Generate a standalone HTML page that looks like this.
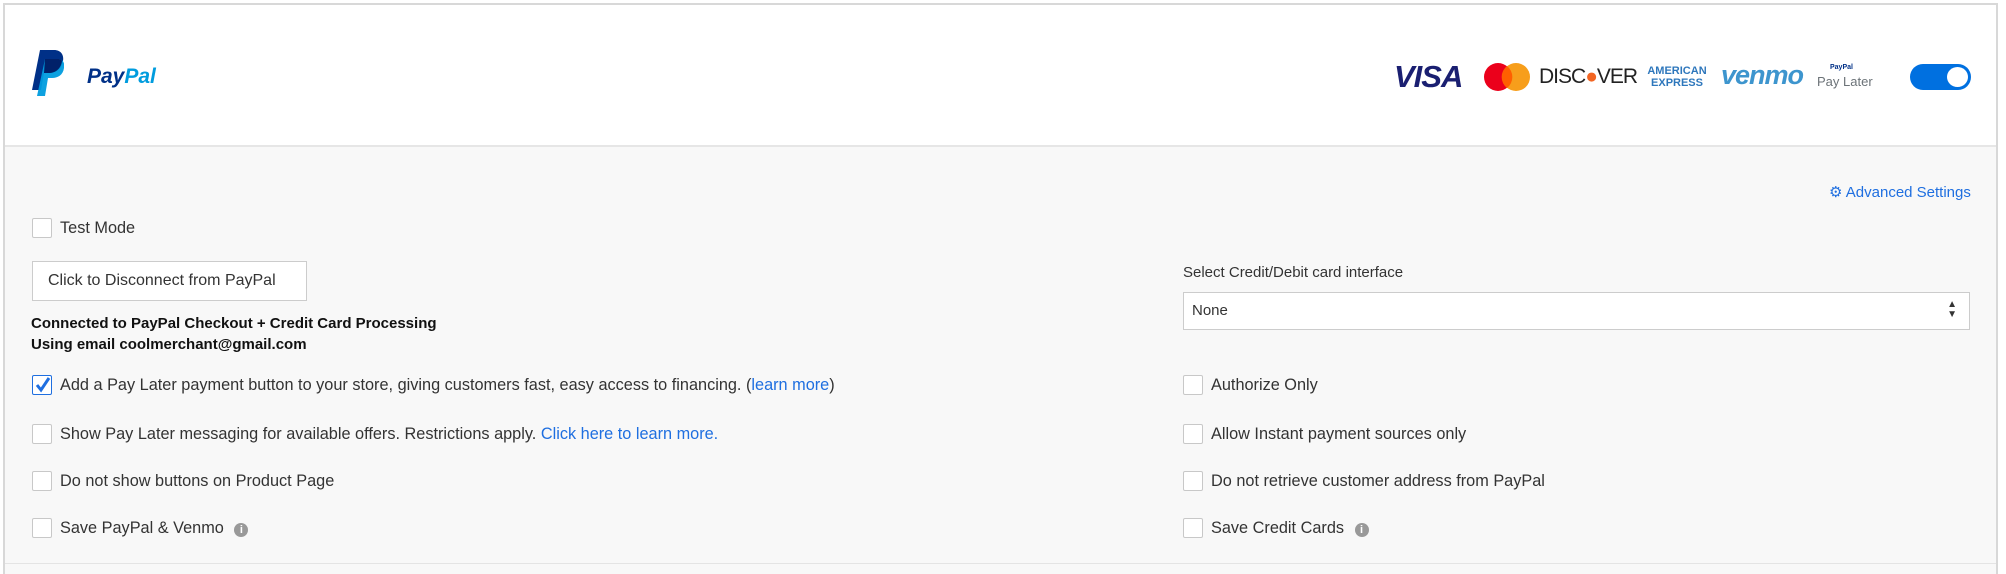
<!DOCTYPE html>
<html><head><meta charset="utf-8"><style>
*{box-sizing:border-box;margin:0;padding:0}
body{width:2006px;height:574px;background:#fff;font-family:"Liberation Sans",sans-serif;color:#333;position:relative;overflow:hidden}
.abs{position:absolute}
.outer{left:3px;top:3px;width:1995px;height:571px;border:2px solid #d8d8d8;border-bottom:none;background:#f8f8f8}
.head{left:5px;top:5px;width:1991px;height:142px;background:#fff;border-bottom:2px solid #e6e6e6}
.cb{width:20px;height:20px;border:1px solid #c8c8c8;background:#fff;border-radius:2px}
.lbl{font-size:16.3px;color:#333;white-space:nowrap}
a{color:#1f6fe0;text-decoration:none}
</style></head><body>
<div class="abs outer"></div>
<div class="abs head"></div>
<svg class="abs" style="left:32px;top:50px" width="32" height="52" viewBox="0 0 32 52">
<path d="M8 0h14c7 0 10 5 9 11c-1 8-7 12-14 12h-5l-3 17h-9z" fill="#003087"/>
<path d="M13 9h13c5 0 7 4 6 9c-1 7-6 10-12 10h-4l-3 18h-8l8-37z" fill="#009cde" opacity=".95"/>
<path d="M13 9h13c2 0 4 1 4 2c-1 8-7 12-13 12h-5z" fill="#012169"/>
</svg>
<div class="abs" style="left:87px;top:65px;font-size:21px;font-weight:bold;font-style:italic;color:#003087">Pay<span style="color:#009cde">Pal</span></div>
<div class="abs" style="left:1394px;top:59px;font-size:31px;font-weight:bold;font-style:italic;color:#1a1f71;letter-spacing:-1px">VISA</div>
<svg class="abs" style="left:1484px;top:63px" width="46" height="28"><circle cx="14" cy="14" r="14" fill="#eb001b"/><circle cx="32" cy="14" r="14" fill="#f79e1b"/><path d="M23 3a14 14 0 0 1 0 22a14 14 0 0 1 0-22z" fill="#ff5f00"/></svg>
<div class="abs" style="left:1539px;top:65px;font-size:21px;color:#222;letter-spacing:-1px">DISC<span style="color:#f26522">●</span>VER</div>
<div class="abs" style="left:1644px;top:65px;font-size:11px;font-weight:bold;color:#2e77bc;line-height:12px;text-align:center;width:66px">AMERICAN<br>EXPRESS</div>
<div class="abs" style="left:1721px;top:60px;font-size:27px;font-weight:bold;font-style:italic;color:#3d95ce;letter-spacing:-1px">venmo</div>
<div class="abs" style="left:1820px;top:64px;font-size:7px;font-weight:bold;color:#003087;padding-left:10px">PayPal</div>
<div class="abs" style="left:1817px;top:74px;font-size:13px;color:#6c7378">Pay Later</div>
<div class="abs" style="left:1910px;top:64px;width:61px;height:26px;border-radius:13px;background:#0070e0"></div>
<div class="abs" style="left:1947px;top:67px;width:21px;height:20px;border-radius:50%;background:#fff"></div>

<div class="abs" style="left:1829px;top:183px;font-size:15px;color:#1f6fe0">⚙ Advanced Settings</div>

<div class="abs cb" style="left:32px;top:218px"></div>
<div class="abs lbl" style="left:60px;top:219px">Test Mode</div>
<div class="abs" style="left:32px;top:261px;width:275px;height:40px;border:1px solid #ccc;background:#fff;font-size:16px;padding:10px 0 0 15px;white-space:nowrap">Click to Disconnect from PayPal</div>
<div class="abs" style="left:31px;top:313px;font-size:15px;font-weight:bold;color:#111;line-height:21px">Connected to PayPal Checkout + Credit Card Processing<br>Using email coolmerchant@gmail.com</div>

<div class="abs cb" style="left:32px;top:375px;border-color:#1f6fe0"></div>
<svg class="abs" style="left:34px;top:376px" width="18" height="18"><path d="M3 9l4 5l8-12" stroke="#1f6fe0" stroke-width="3" fill="none"/></svg>
<div class="abs lbl" style="left:60px;top:376px">Add a Pay Later payment button to your store, giving customers fast, easy access to financing. (<a>learn more</a>)</div>
<div class="abs cb" style="left:32px;top:424px"></div>
<div class="abs lbl" style="left:60px;top:425px">Show Pay Later messaging for available offers. Restrictions apply. <a>Click here to learn more.</a></div>
<div class="abs cb" style="left:32px;top:471px"></div>
<div class="abs lbl" style="left:60px;top:472px">Do not show buttons on Product Page</div>
<div class="abs cb" style="left:32px;top:518px"></div>
<div class="abs lbl" style="left:60px;top:519px">Save PayPal &amp; Venmo <span style="display:inline-block;width:14px;height:14px;border-radius:50%;background:#999;color:#fff;font-size:11px;text-align:center;line-height:14px;margin-left:6px;font-weight:bold">i</span></div>

<div class="abs lbl" style="left:1183px;top:264px;font-size:15px">Select Credit/Debit card interface</div>
<div class="abs" style="left:1183px;top:292px;width:787px;height:38px;border:1px solid #ccc;background:#fff;font-size:15px;padding:9px 0 0 8px">None<span style="position:absolute;right:12px;top:7px;font-size:10px;line-height:10px;color:#333">▲<br>▼</span></div>

<div class="abs cb" style="left:1183px;top:375px"></div>
<div class="abs lbl" style="left:1211px;top:376px">Authorize Only</div>
<div class="abs cb" style="left:1183px;top:424px"></div>
<div class="abs lbl" style="left:1211px;top:425px">Allow Instant payment sources only</div>
<div class="abs cb" style="left:1183px;top:471px"></div>
<div class="abs lbl" style="left:1211px;top:472px">Do not retrieve customer address from PayPal</div>
<div class="abs cb" style="left:1183px;top:518px"></div>
<div class="abs lbl" style="left:1211px;top:519px">Save Credit Cards <span style="display:inline-block;width:14px;height:14px;border-radius:50%;background:#999;color:#fff;font-size:11px;text-align:center;line-height:14px;margin-left:6px;font-weight:bold">i</span></div>

<div class="abs" style="left:5px;top:563px;width:1991px;height:1px;background:#e4e4e4"></div>
</body></html>
